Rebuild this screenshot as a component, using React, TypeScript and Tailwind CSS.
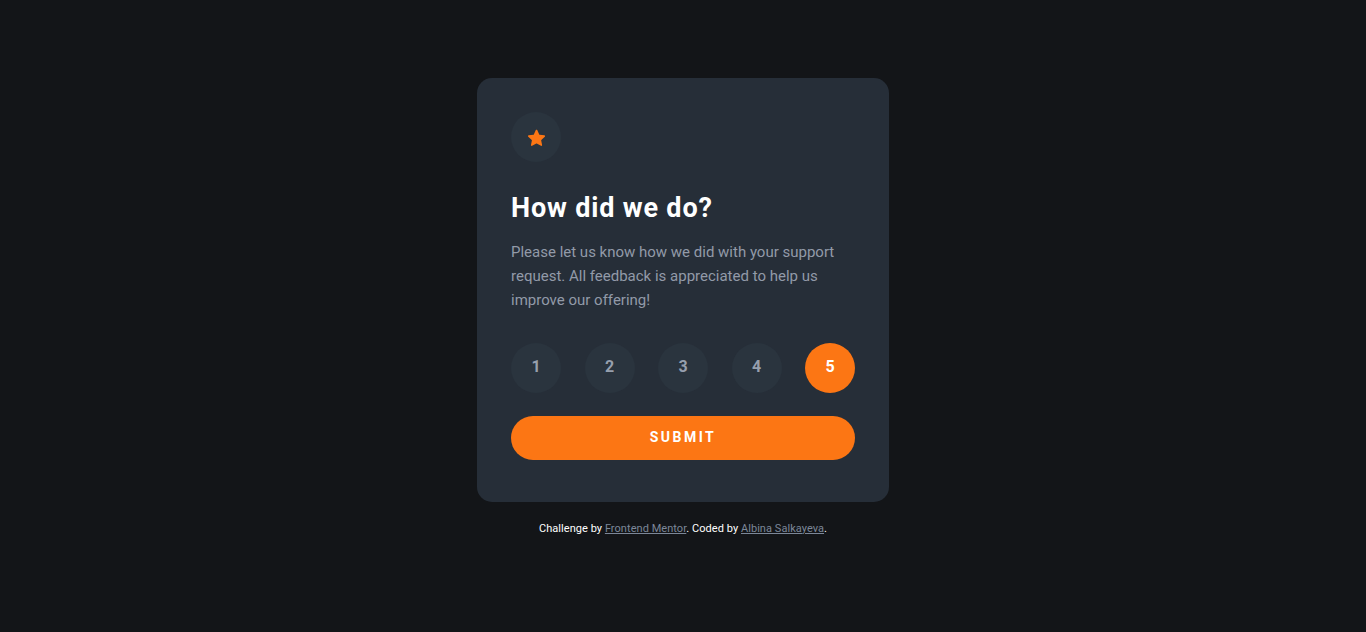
export default function App() {
  const nums = [1, 2, 3, 4, 5];
  return (
    <div className="min-h-screen bg-[#131518] flex flex-col items-center justify-center font-['Roboto',sans-serif]">
      <div className="w-[412px] h-[424px] bg-[#262e38] rounded-[15px] px-[34px] pt-[34px] flex flex-col">
        <div className="w-[50px] h-[50px] rounded-full bg-[#2a343e] flex items-center justify-center">
          <svg width="17" height="17" viewBox="0 0 17 16" aria-hidden="true">
            <path d="M9.23.59l2.01 4.36c.07.15.21.25.37.27l4.77.57c.66.08.93.9.44 1.35l-3.53 3.26a.45.45 0 0 0-.14.42l.94 4.71c.13.65-.57 1.16-1.15.84l-4.19-2.35a.45.45 0 0 0-.44 0l-4.19 2.35c-.58.32-1.28-.19-1.15-.84l.94-4.71a.45.45 0 0 0-.14-.42L.24 7.14c-.49-.45-.22-1.27.44-1.35l4.77-.57a.45.45 0 0 0 .37-.27L7.83.59c.28-.6 1.12-.6 1.4 0z" fill="#fc7614" />
          </svg>
        </div>
        <h1 className="mt-[28px] h-[36px] text-[27px] leading-[36px] font-bold text-white tracking-[0.83px]">How did we do?</h1>
        <p className="mt-[14px] text-[15px] leading-[24px] text-[#929aa8] tracking-[0px]">
          Please let us know how we did with your support request. All feedback is appreciated to help us improve our offering!
        </p>
        <div className="mt-[31px] flex justify-between">
          {nums.map((n) => (
            <button
              key={n}
              className={
                n === 5
                  ? "w-[50px] h-[50px] rounded-full bg-[#fc7614] text-white text-[16px] font-bold flex items-center justify-center pb-[2px]"
                  : "w-[50px] h-[50px] rounded-full bg-[#2a343e] text-[#969fad] text-[16px] font-bold flex items-center justify-center pb-[2px]"
              }
            >
              {n}
            </button>
          ))}
        </div>
        <button className="mt-[23px] h-[44px] w-full rounded-[22px] bg-[#fc7614] text-white text-[14px] font-bold tracking-[2.5px] pb-[2px]">
          SUBMIT
        </button>
      </div>
      <div className="h-[52px] pt-[2px] flex items-center text-[11px] tracking-[0.05px] text-white">
        <span>
          Challenge by <a className="underline text-[#7c8798]">Frontend Mentor</a>. Coded by{" "}
          <a className="underline text-[#7c8798]">Albina Salkayeva</a>.
        </span>
      </div>
    </div>
  );
}
